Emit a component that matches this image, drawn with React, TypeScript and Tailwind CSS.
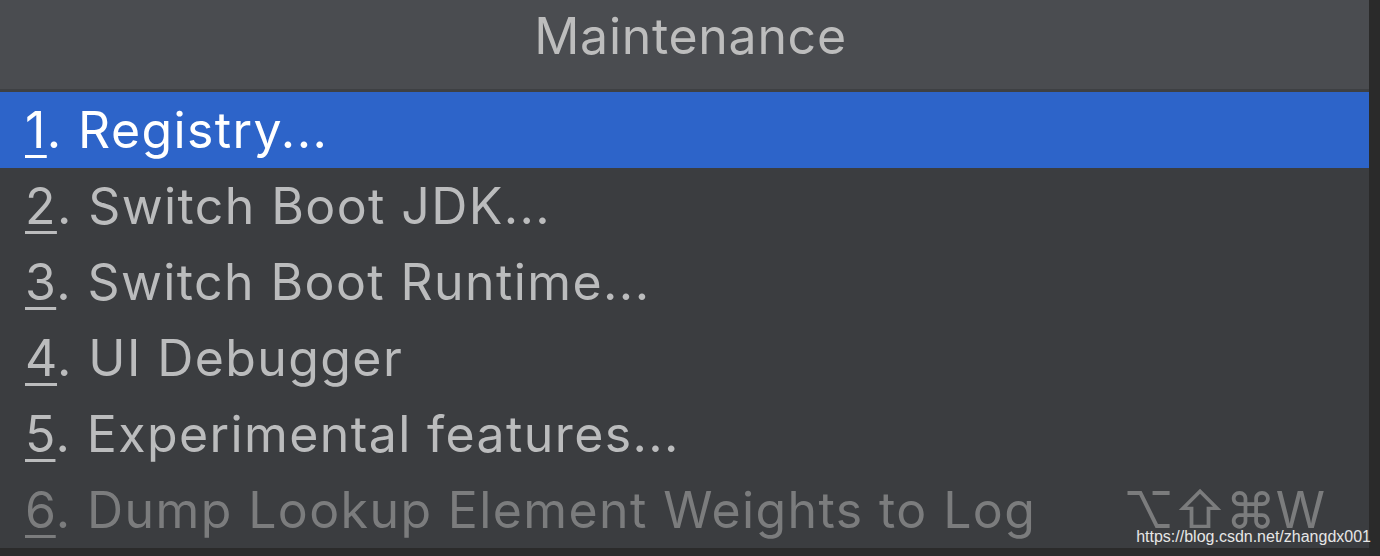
import React from "react";

const items = [
  { n: "1", label: "Registry...", selected: true },
  { n: "2", label: "Switch Boot JDK..." },
  { n: "3", label: "Switch Boot Runtime..." },
  { n: "4", label: "UI Debugger" },
  { n: "5", label: "Experimental features..." },
  { n: "6", label: "Dump Lookup Element Weights to Log", disabled: true, shortcut: "⌥⇧⌘W" },
];

export default function App() {
  return (
    <div
      className="relative flex w-[1380px] h-[556px] bg-[#2b2b2b] overflow-hidden"
      style={{ fontFamily: "Inter, 'Noto Sans', sans-serif" }}
    >
      <div className="flex flex-col w-[1369px] h-full">
        <div className="h-[89px] bg-[#4a4c50] flex justify-center pt-[6px]">
          <span className="text-[50px] leading-[60px] tracking-[0.7px] text-[#bdbdbd] translate-x-[6px]">Maintenance</span>
        </div>
        <div className="h-[3px] bg-[#3e4043]" />
        <div className="flex flex-col bg-[#3b3d40]">
          {items.map((it) => (
            <div
              key={it.n}
              className={`h-[76px] flex items-center pl-[25px] pr-[44px] ${
                it.selected ? "bg-[#2d64c9] text-[#ffffff]" : it.disabled ? "text-[#7b7c7d]" : "text-[#bbbcbd]"
              }`}
            >
              <span className="text-[50px] leading-[60px] tracking-[1.4px] whitespace-nowrap">
                <span className="underline decoration-[3px] underline-offset-[7px]">{it.n}</span>. {it.label}
              </span>
              {it.shortcut && (
                <span className="ml-auto text-[50px] leading-[60px] text-[#7b7c7d]">{it.shortcut}</span>
              )}
            </div>
          ))}
        </div>
        <div className="flex-1 bg-[#2b2b2b]" />
      </div>
      <div className="flex-1 bg-[#2a2a2a]" />
      <span
        className="absolute right-[9px] bottom-[10px] text-[16px] leading-[18px] text-[#e6e6e6]"
        style={{ fontFamily: "'Liberation Sans', Arial, sans-serif" }}
      >
        https://blog.csdn.net/zhangdx001
      </span>
    </div>
  );
}
